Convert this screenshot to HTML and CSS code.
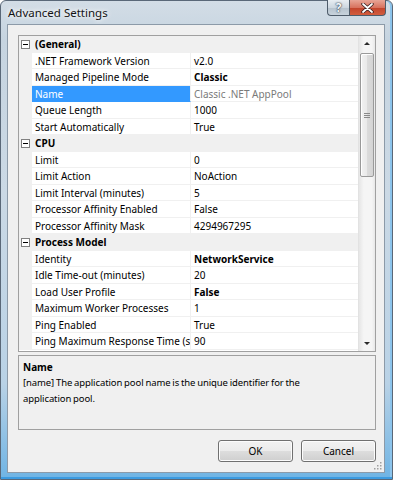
FILE: index.html
```html
<!DOCTYPE html>
<html lang="en">
<head>
    <meta charset="UTF-8">
    <meta name="viewport" content="width=device-width, initial-scale=1.0">
    <title>Advanced Settings</title>
    <link rel="stylesheet" href="styles.css">
</head>
<body>
    <div class="window">
        <div class="titlebar">
            <span class="title">Advanced Settings</span>
            <div class="caption-buttons">
                <span class="cap-btn help">?</span>
                <span class="cap-btn close">
                    <svg width="13" height="10" viewBox="0 0 13 10">
                        <path d="M2 1 L11 9 M11 1 L2 9" stroke="#3a2020" stroke-width="3.4" stroke-linecap="round"/>
                        <path d="M2 1 L11 9 M11 1 L2 9" stroke="#ffffff" stroke-width="1.8" stroke-linecap="round"/>
                    </svg>
                </span>
            </div>
        </div>

        <div class="client">
            <div class="grid">
                <div class="rows">
                    <div class="row cat"><span class="gutter"><span class="toggle"></span></span><span class="label">(General)</span></div>
                    <div class="row"><span class="gutter"></span><span class="label">.NET Framework Version</span><span class="value">v2.0</span></div>
                    <div class="row"><span class="gutter"></span><span class="label">Managed Pipeline Mode</span><span class="value bold">Classic</span></div>
                    <div class="row selected"><span class="gutter"></span><span class="label">Name</span><span class="value disabled">Classic .NET AppPool</span></div>
                    <div class="row"><span class="gutter"></span><span class="label">Queue Length</span><span class="value">1000</span></div>
                    <div class="row"><span class="gutter"></span><span class="label">Start Automatically</span><span class="value">True</span></div>
                    <div class="row cat"><span class="gutter"><span class="toggle"></span></span><span class="label">CPU</span></div>
                    <div class="row"><span class="gutter"></span><span class="label">Limit</span><span class="value">0</span></div>
                    <div class="row"><span class="gutter"></span><span class="label">Limit Action</span><span class="value">NoAction</span></div>
                    <div class="row"><span class="gutter"></span><span class="label">Limit Interval (minutes)</span><span class="value">5</span></div>
                    <div class="row"><span class="gutter"></span><span class="label">Processor Affinity Enabled</span><span class="value">False</span></div>
                    <div class="row"><span class="gutter"></span><span class="label">Processor Affinity Mask</span><span class="value">4294967295</span></div>
                    <div class="row cat"><span class="gutter"><span class="toggle"></span></span><span class="label">Process Model</span></div>
                    <div class="row"><span class="gutter"></span><span class="label">Identity</span><span class="value bold">NetworkService</span></div>
                    <div class="row"><span class="gutter"></span><span class="label">Idle Time-out (minutes)</span><span class="value">20</span></div>
                    <div class="row"><span class="gutter"></span><span class="label">Load User Profile</span><span class="value bold">False</span></div>
                    <div class="row"><span class="gutter"></span><span class="label">Maximum Worker Processes</span><span class="value">1</span></div>
                    <div class="row"><span class="gutter"></span><span class="label">Ping Enabled</span><span class="value">True</span></div>
                    <div class="row"><span class="gutter"></span><span class="label">Ping Maximum Response Time (s</span><span class="value">90</span></div>
                </div>
                <div class="scrollbar">
                    <span class="arrow up"></span>
                    <div class="track">
                        <div class="thumb"><span class="grip"></span></div>
                    </div>
                    <span class="arrow down"></span>
                </div>
            </div>

            <div class="desc">
                <div class="desc-title">Name</div>
                <div class="desc-text">[name] The application pool name is the unique identifier for the application pool.</div>
            </div>

            <div class="buttons">
                <button class="btn">OK</button>
                <button class="btn">Cancel</button>
            </div>

            <svg class="sizegrip" width="8" height="8" viewBox="0 0 8 8">
                <rect x="6" y="0" width="1.5" height="1.5" fill="#a0a0a0"/>
                <rect x="3" y="3" width="1.5" height="1.5" fill="#a0a0a0"/>
                <rect x="6" y="3" width="1.5" height="1.5" fill="#a0a0a0"/>
                <rect x="0" y="6" width="1.5" height="1.5" fill="#a0a0a0"/>
                <rect x="3" y="6" width="1.5" height="1.5" fill="#a0a0a0"/>
                <rect x="6" y="6" width="1.5" height="1.5" fill="#a0a0a0"/>
            </svg>
        </div>
    </div>
</body>
</html>
```

FILE: styles.css
```css
body {
    margin: 0;
    padding: 0;
    font-family: 'Noto Sans', 'Open Sans', Arial, sans-serif;
    font-size: 10px;
    color: #000;
    background: #ffffff;
}
.window {
    width: 393px;
    height: 480px;
    box-sizing: border-box;
    padding: 0 7px 6px 6px;
    border: 1px solid #5a6878;
    border-radius: 6px 6px 0 0;
    background: linear-gradient(180deg, #d3dde6 0%, #c6d4e0 8%, #cbd9e5 40%, #b9d2e6 80%, #6fb4e4 100%);
    box-shadow: inset 0 -2px 0 #3c9be0, inset -2px 0 0 #8cc4ec;
    display: flex;
    flex-direction: column;
}
.titlebar {
    height: 23px;
    display: flex;
    align-items: flex-start;
    justify-content: space-between;
    flex-shrink: 0;
}
.title {
    font-size: 11.5px;
    color: #141414;
    padding: 4px 0 0 1px;
    text-shadow: 0 0 4px #ffffff, 0 0 6px #ffffff;
}
.caption-buttons {
    display: flex;
    margin-top: -1px;
    margin-right: -1px;
}
.cap-btn {
    height: 16px;
    display: flex;
    align-items: center;
    justify-content: center;
    box-sizing: border-box;
    border: 1px solid #4e5c6a;
    border-top: none;
}
.cap-btn.help {
    width: 22px;
    border-radius: 0 0 0 4px;
    border-right: none;
    background: linear-gradient(180deg, #e8eef3 0%, #cdd7e0 50%, #b5c2cd 51%, #c8d3dc 100%);
    color: #f4f7fa;
    font-weight: bold;
    font-size: 12px;
    text-shadow: 0 0 2px #2a3440, 0 0 1px #2a3440;
}
.cap-btn.close {
    width: 37px;
    border-radius: 0 0 4px 0;
    background: linear-gradient(180deg, #e8a596 0%, #d8735f 50%, #c2432b 51%, #d25d3e 100%);
}
.client {
    flex: 1;
    background: #f0f0f0;
    border: 1px solid #8c9aa8;
    padding: 10px 8px 0 10px;
    position: relative;
    display: flex;
    flex-direction: column;
}
.grid {
    height: 317px;
    box-sizing: border-box;
    border: 1px solid #a0a0a0;
    background: #ffffff;
    display: flex;
    flex-shrink: 0;
}
.rows {
    flex: 1;
    overflow: hidden;
}
.row {
    height: 16.5px;
    display: flex;
    line-height: 16px;
}
.gutter {
    width: 13px;
    flex-shrink: 0;
    background: #f0f0f0;
    position: relative;
}
.label {
    width: 159px;
    flex-shrink: 0;
    box-sizing: border-box;
    padding-left: 3px;
    white-space: nowrap;
    overflow: hidden;
    border-right: 1px solid #f0f0f0;
    border-bottom: 1px solid #f0f0f0;
}
.value {
    flex: 1;
    padding-left: 3px;
    white-space: nowrap;
    overflow: hidden;
    border-bottom: 1px solid #f0f0f0;
}
.value.bold {
    font-weight: bold;
}
.value.disabled {
    color: #7a7a7a;
}
.row.selected .label {
    background: #3399ff;
    color: #ffffff;
    border-bottom-color: #3399ff;
}
.row.cat {
    background: #f0f0f0;
}
.row.cat .label {
    width: auto;
    flex: 1;
    font-weight: bold;
    border: none;
}
.toggle {
    position: absolute;
    left: 2px;
    top: 4px;
    width: 9px;
    height: 9px;
    box-sizing: border-box;
    border: 1px solid #808080;
    background: #ffffff;
}
.toggle::after {
    content: "";
    position: absolute;
    left: 1px;
    top: 3px;
    width: 5px;
    height: 1px;
    background: #000;
}
.scrollbar {
    width: 16px;
    flex-shrink: 0;
    display: flex;
    flex-direction: column;
    border-left: 1px solid #e2e2e2;
    background: linear-gradient(90deg, #e6e6e6 0%, #f5f5f5 30%, #f5f5f5 80%, #e8e8e8 100%);
}
.arrow {
    height: 16px;
    flex-shrink: 0;
    position: relative;
}
.arrow::after {
    content: "";
    position: absolute;
    left: 5px;
    width: 0;
    height: 0;
    border-left: 3px solid transparent;
    border-right: 3px solid transparent;
}
.arrow.up::after {
    top: 6px;
    border-bottom: 3px solid #2a2a2a;
}
.arrow.down::after {
    top: 7px;
    border-top: 3px solid #2a2a2a;
}
.track {
    flex: 1;
    padding-top: 1px;
}
.thumb {
    height: 124px;
    margin: 0 1px 0 1px;
    box-sizing: border-box;
    border: 1px solid #9a9a9a;
    border-radius: 2px;
    background: linear-gradient(90deg, #f2f2f2 0%, #eaeaea 50%, #dcdcdc 51%, #d4d4d4 100%);
    box-shadow: inset 1px 1px 0 #ffffff;
    display: flex;
    align-items: center;
    justify-content: center;
}
.grip {
    width: 6px;
    height: 5px;
    background: repeating-linear-gradient(180deg, #8a8a8a 0, #8a8a8a 1px, transparent 1px, transparent 2px);
}
.desc {
    margin-top: 3px;
    height: 75px;
    box-sizing: border-box;
    border: 1px solid #a0a0a0;
    padding: 3px 4px 0 4px;
    flex-shrink: 0;
    line-height: 16px;
}
.desc-title {
    font-weight: bold;
}
.desc-text {
    font-size: 9.5px;
    letter-spacing: -0.1px;
    word-spacing: -0.5px;
    max-width: 320px;
}
.buttons {
    margin-top: 10px;
    display: flex;
    justify-content: flex-end;
    gap: 8px;
}
.btn {
    width: 75px;
    height: 22px;
    font-family: inherit;
    font-size: 10px;
    color: #000;
    border: 1px solid #707070;
    border-radius: 3px;
    background: linear-gradient(180deg, #f2f2f2 0%, #ebebeb 50%, #dddddd 51%, #cfcfcf 100%);
    box-shadow: inset 0 0 0 1px #fcfcfc;
    padding: 0;
}
.sizegrip {
    position: absolute;
    right: 2px;
    bottom: 2px;
}
```
